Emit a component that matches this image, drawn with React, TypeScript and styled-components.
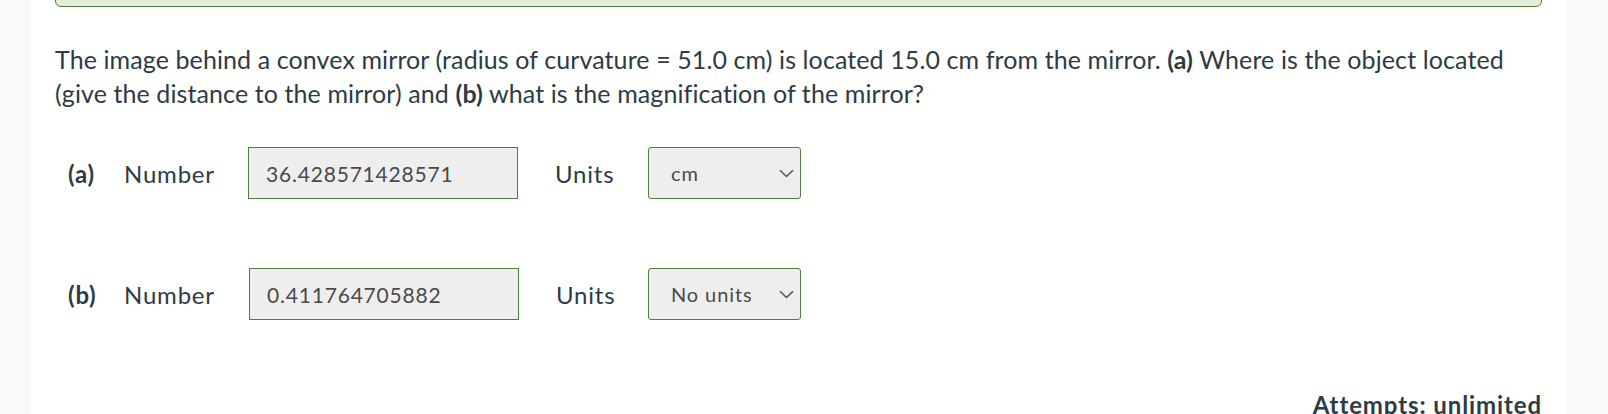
import React from "react";
import styled, { createGlobalStyle } from "styled-components";

const GlobalStyle = createGlobalStyle`
  html, body {
    margin: 0;
    padding: 0;
    background: #f9f9f9;
    overflow: hidden;
  }
  body {
    font-family: Lato, "Open Sans", "Liberation Sans", sans-serif;
    color: #2d3b45;
  }
`;

const Page = styled.div`
  display: flex;
  height: 414px;
  padding-left: 31px;
`;

const Panel = styled.div`
  width: 1536px;
  background: #ffffff;
  padding: 0 25px 0 24px;
  box-sizing: border-box;
`;

const Banner = styled.div`
  height: 47px;
  margin-top: -40px;
  background: #e2eeda;
  border: 1px solid #4f7b3d;
  border-radius: 6px;
  box-sizing: border-box;
`;

const Question = styled.p`
  margin: 35px 0 0;
  font-size: 25px;
  line-height: 34px;
  letter-spacing: 0.1px;
  b {
    font-weight: 700;
  }
`;

const Row = styled.div<{ $top: number }>`
  display: flex;
  align-items: center;
  height: 52px;
  margin-top: ${(p) => p.$top}px;
  padding-left: 13px;
  font-size: 24px;
  letter-spacing: 0.8px;
`;

const Part = styled.span`
  font-weight: 700;
  width: 56px;
`;

const Label = styled.span<{ $w: number }>`
  width: ${(p) => p.$w}px;
`;

const NumberBox = styled.div<{ $shift?: number }>`
  width: 270px;
  height: 52px;
  box-sizing: border-box;
  border: 1px solid #4d7f3a;
  background: #eeeeee;
  color: #4a4a4a;
  font-size: 21px;
  letter-spacing: 0.8px;
  display: flex;
  align-items: center;
  padding-left: 17px;
  margin-left: ${(p) => p.$shift ?? 0}px;
  margin-right: 37px;
`;

const UnitSelect = styled.div`
  width: 153px;
  height: 52px;
  box-sizing: border-box;
  border: 1px solid #4d7f3a;
  border-radius: 3px;
  background: #eeeeee;
  color: #4a4a4a;
  font-size: 20px;
  letter-spacing: 0.9px;
  display: flex;
  align-items: center;
  justify-content: space-between;
  padding: 0 6px 0 22px;
`;

const Footer = styled.div`
  margin-top: 71px;
  text-align: right;
  font-size: 24px;
  line-height: 1.2;
  letter-spacing: 0.9px;
  font-weight: 700;
`;

const Chevron = () => (
  <svg width="15" height="9" viewBox="0 0 15 9" fill="none">
    <path d="M1 1.2 L7.5 7.5 L14 1.2" stroke="#555" strokeWidth="1.6" />
  </svg>
);

export default function App() {
  return (
    <>
      <GlobalStyle />
      <Page>
        <Panel>
          <Banner />
          <Question>
            The image behind a convex mirror (radius of curvature = 51.0 cm) is located 15.0 cm from the
            mirror. <b>(a)</b> Where is the object located (give the distance to the mirror) and <b>(b)</b>{" "}
            what is the magnification of the mirror?
          </Question>
          <Row $top={37}>
            <Part>(a)</Part>
            <Label $w={124}>Number</Label>
            <NumberBox>36.428571428571</NumberBox>
            <Label $w={93}>Units</Label>
            <UnitSelect>
              cm
              <Chevron />
            </UnitSelect>
          </Row>
          <Row $top={69}>
            <Part>(b)</Part>
            <Label $w={124}>Number</Label>
            <NumberBox $shift={1}>0.411764705882</NumberBox>
            <Label $w={92}>Units</Label>
            <UnitSelect>
              No units
              <Chevron />
            </UnitSelect>
          </Row>
          <Footer>Attempts: unlimited</Footer>
        </Panel>
      </Page>
    </>
  );
}
